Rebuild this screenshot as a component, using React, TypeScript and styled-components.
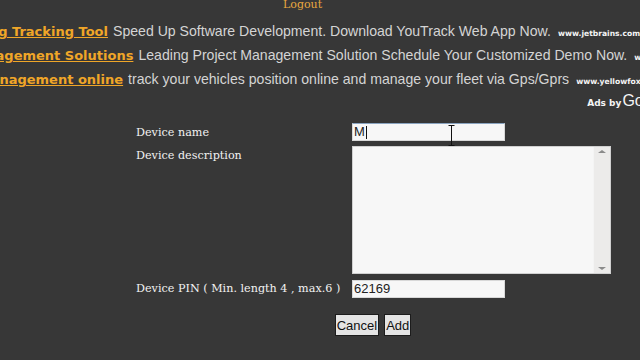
import styled, { createGlobalStyle } from 'styled-components';

interface IAd {
  title: string;
  text: string;
  url: string;
  shift: number;
}

const ADS: IAd[] = [{
  title: 'Bug Tracking Tool',
  text: 'Speed Up Software Development. Download YouTrack Web App Now.',
  url: 'www.jetbrains.com',
  shift: -21
}, {
  title: 'Project Management Solutions',
  text: 'Leading Project Management Solution Schedule Your Customized Demo Now.',
  url: 'www.workfront.com',
  shift: -92
}, {
  title: 'Fleet Management online',
  text: 'track your vehicles position online and manage your fleet via Gps/Gprs',
  url: 'www.yellowfox.com',
  shift: -64
}];

const GlobalStyle = createGlobalStyle`
  html, body {
    margin: 0;
    padding: 0;
    background: #373737;
    overflow: hidden;
  }
`;

const ScPage = styled.div`
  width: 640px;
  height: 360px;
  overflow: hidden;
  background: #373737;
`;

const ScTop = styled.div`
  height: 10px;
  padding-left: 283px;
  display: flex;
  align-items: flex-end;
`;

const ScLogout = styled.a`
  font-family: "DejaVu Serif", Georgia, serif;
  font-size: 11px;
  line-height: 11px;
  color: #e8a840;
  text-decoration: none;
  cursor: pointer;
`;

const ScAds = styled.div`
  padding-top: 13px;
  display: flex;
  flex-direction: column;
`;

const ScAdRow = styled.div<{ $shift: number }>`
  display: flex;
  align-items: baseline;
  white-space: nowrap;
  height: 24px;
  margin-left: ${p => p.$shift}px;
`;

const ScAdTitle = styled.a`
  font-family: "DejaVu Sans", Verdana, sans-serif;
  font-weight: bold;
  font-size: 13px;
  color: #f0a628;
  text-decoration: underline;
  margin-right: 5px;
`;

const ScAdText = styled.span`
  font-family: "Liberation Sans", Arial, sans-serif;
  font-size: 14.1px;
  color: #d4d4d4;
  margin-right: 7px;
`;

const ScAdUrl = styled.span`
  font-family: "DejaVu Sans", Verdana, sans-serif;
  font-weight: bold;
  font-size: 7.6px;
  color: #f4f4f4;
`;

const ScAdsBy = styled.div`
  display: flex;
  justify-content: flex-end;
  align-items: baseline;
  gap: 1px;
  height: 12px;
  margin-top: -3px;
  margin-right: -34px;
  font-family: "DejaVu Sans", Verdana, sans-serif;
  color: #f4f4f4;
  font-weight: bold;
  font-size: 9px;

  b {
    font-family: "Liberation Sans", Arial, sans-serif;
    font-weight: normal;
    font-size: 16px;
  }
`;

const ScForm = styled.div`
  margin-top: 19px;
  margin-left: 136px;
  width: 475px;
  display: grid;
  grid-template-columns: 216px 1fr;
  row-gap: 5px;
`;

const ScLabel = styled.label<{ $top?: boolean }>`
  font-family: "DejaVu Serif", Georgia, serif;
  font-size: 11.2px;
  color: #f2f2f2;
  display: flex;
  align-items: ${p => p.$top ? 'flex-start' : 'center'};
  padding-top: ${p => p.$top ? '3px' : '0'};
  height: ${p => p.$top ? 'auto' : '18px'};
`;

const ScInput = styled.div<{ $focus?: boolean; $gap?: number }>`
  position: relative;
  box-sizing: border-box;
  width: 153px;
  height: 18px;
  margin-top: ${p => p.$gap ?? 0}px;
  background: #f7f7f7;
  border: 1px solid #d8d8d8;
  border-top-color: ${p => p.$focus ? '#8aa4c0' : '#d8d8d8'};
  font-family: "Liberation Sans", Arial, sans-serif;
  font-size: 13px;
  color: #222;
  line-height: 16px;
  padding-left: 1px;
  display: flex;
  align-items: center;
`;

const ScCaret = styled.span`
  display: inline-block;
  width: 1px;
  height: 13px;
  background: #111;
  margin-left: 1px;
`;

const ScTextArea = styled.div`
  box-sizing: border-box;
  width: 259px;
  height: 128px;
  background: #f7f7f7;
  border: 1px solid #d0d0d0;
  display: flex;
  justify-content: flex-end;
`;

const ScScroll = styled.div`
  width: 16px;
  background: #ecebea;
  border-left: 1px solid #f4f4f4;
  display: flex;
  flex-direction: column;
  justify-content: space-between;
  align-items: center;
  padding: 3px 0;
`;

const ScArrow = styled.span<{ $down?: boolean }>`
  width: 0;
  height: 0;
  border-left: 4px solid transparent;
  border-right: 4px solid transparent;
  ${p => p.$down
    ? 'border-top: 3px solid #8a8a8a;'
    : 'border-bottom: 3px solid #8a8a8a;'}
`;

const ScActions = styled.div`
  grid-column: 1 / span 2;
  display: flex;
  justify-content: center;
  gap: 5px;
  margin-top: 11px;
  padding-right: 1px;
`;

const ScButton = styled.button`
  height: 22px;
  padding: 0 1px;
  background: #e4e4e4;
  border: 1px solid #1c1c1c;
  border-radius: 0;
  font-family: "Liberation Sans", Arial, sans-serif;
  font-size: 13px;
  color: #111;
`;

const ScIBeam = styled.svg`
  position: absolute;
  left: 95px;
  top: 1px;
`;

export default function App() {
  return <ScPage>
    <GlobalStyle />
    <ScTop>
      <ScLogout>Logout</ScLogout>
    </ScTop>
    <ScAds>
      {ADS.map((ad, idx) => <ScAdRow key={idx} $shift={ad.shift}>
        <ScAdTitle>{ad.title}</ScAdTitle>
        <ScAdText>{ad.text}</ScAdText>
        <ScAdUrl>{ad.url}</ScAdUrl>
      </ScAdRow>)}
      <ScAdsBy>Ads by <b>Google</b></ScAdsBy>
    </ScAds>
    <ScForm>
      <ScLabel>Device name</ScLabel>
      <ScInput $focus>
        M<ScCaret />
        <ScIBeam width="7" height="21" viewBox="0 0 7 21">
          <path d="M0.5 0.5h6M3.5 0.5v20M0.5 20.5h6" stroke="#111" strokeWidth="1" fill="none" />
        </ScIBeam>
      </ScInput>
      <ScLabel $top>Device description</ScLabel>
      <ScTextArea>
        <ScScroll>
          <ScArrow />
          <ScArrow $down />
        </ScScroll>
      </ScTextArea>
      <ScLabel>Device PIN ( Min. length 4 , max.6 )</ScLabel>
      <ScInput $gap={1}>62169</ScInput>
      <ScActions>
        <ScButton>Cancel</ScButton>
        <ScButton>Add</ScButton>
      </ScActions>
    </ScForm>
  </ScPage>;
}
